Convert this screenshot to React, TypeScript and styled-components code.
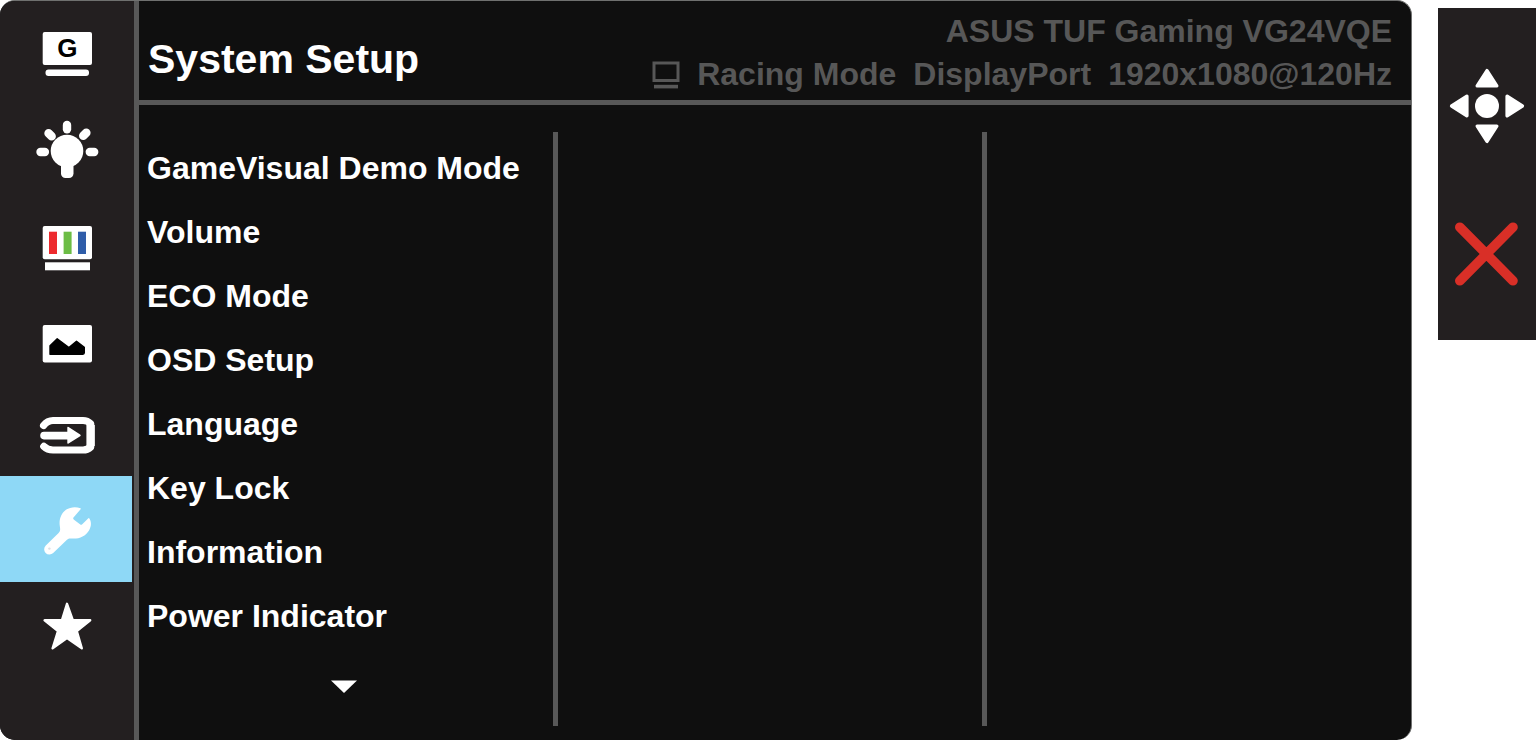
import React from "react";
import styled, { createGlobalStyle } from "styled-components";

const colors = {
  panel: "#0f0f0f",
  rail: "#231f20",
  line: "#585858",
  edge: "#6f706f",
  dim: "#575757",
  active: "#8ed8f6",
  close: "#d92f27",
};

const GlobalStyle = createGlobalStyle`
  *, *::before, *::after { box-sizing: border-box; }
  body {
    margin: 0;
    background: #fff;
    font-family: "Liberation Sans", Arial, sans-serif;
    font-weight: 700;
  }
`;

const Page = styled.div`
  display: flex;
  align-items: flex-start;
  gap: 26px;
`;

const Osd = styled.main`
  flex: 1;
  min-width: 0;
  display: flex;
  overflow: hidden;
  background: ${colors.panel};
  border: solid ${colors.edge};
  border-width: 1px 1px 0 0;
  border-radius: 15px;
`;

const Rail = styled.nav`
  flex: none;
  width: 139px;
  background: ${colors.rail};
  border-right: 5px solid ${colors.line};
`;

const PlainButton = styled.button`
  display: flex;
  margin: 0;
  padding: 0;
  border: 0;
  background: none;
  color: #fff;
  font: inherit;
  cursor: pointer;
`;

const RailButton = styled(PlainButton)<{ $active?: boolean }>`
  width: 132px;
  height: ${(p) => (p.$active ? 106 : 95)}px;
  padding-top: 18px;
  justify-content: center;
  align-items: flex-start;
  background: ${(p) => (p.$active ? colors.active : "transparent")};
`;

const Main = styled.div`
  flex: 1;
  min-width: 0;
`;

const Header = styled.header`
  display: flex;
  justify-content: space-between;
  align-items: flex-start;
  height: 104px;
  padding: 9px 19px 0 9px;
  border-bottom: 5px solid ${colors.line};
`;

const Title = styled.h1`
  margin: 26px 0 0;
  color: #fff;
  font-size: 41px;
  line-height: 46px;
  white-space: nowrap;
`;

const Status = styled.div`
  display: flex;
  flex-direction: column;
  align-items: flex-end;
  color: ${colors.dim};
  font-size: 32px;
  line-height: 43px;
  white-space: nowrap;
`;

const StatusRow = styled.div`
  display: flex;
  align-items: center;
  gap: 17px;
`;

const Columns = styled.div`
  display: grid;
  grid-template-columns: 414fr 429fr 429fr;
  padding: 27px 0 14px;
`;

const Column = styled.section`
  border-left: 5px solid ${colors.line};
`;

const MenuColumn = styled.section`
  padding-top: 4px;
`;

const Menu = styled.ul`
  margin: 0;
  padding: 0;
  list-style: none;
`;

const MenuButton = styled(PlainButton)`
  width: 100%;
  padding-left: 8px;
  font-size: 32px;
  line-height: 64px;
  white-space: nowrap;
`;

const MoreButton = styled(PlainButton)`
  width: 100%;
  height: 78px;
  padding: 0 4px 2px 0;
  align-items: center;
  justify-content: center;
`;

const Controls = styled.aside`
  flex: none;
  display: flex;
  flex-direction: column;
  align-items: center;
  gap: 78px;
  width: 98px;
  margin-top: 8px;
  padding: 60px 0 54px;
  background: ${colors.rail};
`;

const RailSvg = ({ children }: { children: React.ReactNode }) => (
  <svg width="72" height="72" viewBox="0 0 72 72" fill="#fff" aria-hidden="true">
    {children}
  </svg>
);

const GamingIcon = () => (
  <RailSvg>
    <rect x="12.7" y="13" width="49.3" height="33" rx="2" />
    <rect x="15.5" y="50.5" width="43.5" height="6.5" rx="3" />
    <text x="37.4" y="38.4" fontSize="26" textAnchor="middle" fill="#000">G</text>
  </RailSvg>
);

const BulbIcon = () => (
  <RailSvg>
    <circle cx="37" cy="37" r="16.3" />
    <path d="M31 48v11.5a4.5 4.5 0 0 0 4.5 4.5h3.5a4.5 4.5 0 0 0 4.5-4.5V48z" />
    <rect x="32.8" y="6.7" width="8.4" height="12.8" rx="4.2" />
    <rect x="6.3" y="33.7" width="12.8" height="8.6" rx="4.2" />
    <rect x="55.6" y="33.7" width="12.8" height="8.6" rx="4.2" />
    <path d="M18.6 19.2l3 3M56.3 18.8l-3 3" stroke="#fff" strokeWidth="8.6" strokeLinecap="round" />
  </RailSvg>
);

const ColorIcon = () => (
  <RailSvg>
    <rect x="12.7" y="17" width="49.3" height="33.3" rx="2" />
    <rect x="15" y="53.3" width="45" height="8" />
    <rect x="19" y="22.7" width="8" height="22.3" fill="#ed2a2e" />
    <rect x="33.6" y="22.7" width="8" height="22.3" fill="#6cbd45" />
    <rect x="48" y="22.7" width="8" height="22.3" fill="#2f5da9" />
  </RailSvg>
);

const ImageIcon = () => (
  <RailSvg>
    <rect x="12.7" y="21" width="49.3" height="37.6" rx="2" />
    <path
      d="M20 41.8l7.2-7 11.7 8.8 7.6-6.4 7.8 6.2v5.4q0 1.4-1.4 1.4H20z"
      fill="#000"
      stroke="#000"
      strokeWidth="1.4"
      strokeLinejoin="round"
    />
  </RailSvg>
);

const InputIcon = () => (
  <RailSvg>
    <path
      d="M13.6 26.4Q17.5 21.5 23 21.5H53Q57.5 21.5 60.7 24.8V48Q57.5 51 53 51H23Q17.5 51 13.8 47.4"
      fill="none"
      stroke="#fff"
      strokeWidth="7.2"
      strokeLinecap="round"
      strokeLinejoin="round"
    />
    <path d="M56.4 26h8.4v21h-8.4z" />
    <path d="M14 32.8H37.3V28.6Q37.3 27.4 38.6 28L50.2 35.4Q51.4 36.3 50.2 37.2L38.6 44.6Q37.3 45.2 37.3 44V40.4H14a3.8 3.8 0 0 1 0-7.6z" />
  </RailSvg>
);

const WrenchIcon = () => (
  <RailSvg>
    <path d="M50.4 14.2C46 12.5 40.3 12.8 36 15.8C31.2 19 28.8 25.6 29.8 32C30.3 35.4 30.5 37.2 28.6 39L15.8 51.4A5.3 5.3 0 0 0 23.2 59.1L37 45.7C38.5 44.3 39.6 44.3 41.8 44.5C48.6 45.2 55.6 42.2 59 36.4C61.4 32.2 61.6 27.8 59.4 24.4Q58.8 23.7 58.1 24.5L52 30.4Q51.2 31 50.3 30.5L43.7 25.4Q42.9 24.7 43.3 23.7L50.6 15.3Q51.2 14.5 50.4 14.2z" />
    <circle cx="19.4" cy="54.6" r="1.2" fill="#dfe0e4" />
  </RailSvg>
);

const StarIcon = () => (
  <RailSvg>
    <path
      d="M37 3.8L42.9 20.3H60.2L46.8 31L51.8 48.3L37 38L22.6 48.3L28 31L14.6 20.3H31.9z"
      stroke="#fff"
      strokeWidth="2.4"
      strokeLinejoin="round"
    />
  </RailSvg>
);

const MonitorIcon = () => (
  <svg width="28" height="28" viewBox="0 0 28 28" aria-hidden="true">
    <rect x="2" y="2" width="24" height="17.5" fill="none" stroke={colors.dim} strokeWidth="3" />
    <rect x="2" y="23.8" width="24" height="3.6" fill={colors.dim} />
  </svg>
);

const StickIcon = () => (
  <svg width="76" height="76" viewBox="-38 -38 76 76" fill="#fff" aria-hidden="true">
    <circle r="12" />
    {[0, 90, 180, 270].map((angle) => (
      <path
        key={angle}
        d="M0-35.4L9.8-20.1H-9.8z"
        transform={`rotate(${angle})`}
        stroke="#fff"
        strokeWidth="3.4"
        strokeLinejoin="round"
      />
    ))}
  </svg>
);

const CloseIcon = () => (
  <svg width="64" height="64" viewBox="0 0 64 64" aria-hidden="true">
    <path
      d="M4.8 5.2L58 58.8M58 5.2L4.8 58.8"
      stroke={colors.close}
      strokeWidth="9.6"
      strokeLinecap="round"
    />
  </svg>
);

const sections = [
  { label: "Gaming", Icon: GamingIcon },
  { label: "Image brightness", Icon: BulbIcon },
  { label: "Color", Icon: ColorIcon },
  { label: "Image", Icon: ImageIcon },
  { label: "Input Select", Icon: InputIcon },
  { label: "System Setup", Icon: WrenchIcon, active: true },
  { label: "MyFavorite", Icon: StarIcon },
];

const menuItems = [
  "GameVisual Demo Mode",
  "Volume",
  "ECO Mode",
  "OSD Setup",
  "Language",
  "Key Lock",
  "Information",
  "Power Indicator",
];

export default function App() {
  return (
    <>
      <GlobalStyle />
      <Page>
        <Osd>
          <Rail>
            {sections.map(({ label, Icon, active }) => (
              <RailButton
                key={label}
                type="button"
                aria-label={label}
                aria-current={active ? "page" : undefined}
                $active={active}
              >
                <Icon />
              </RailButton>
            ))}
          </Rail>
          <Main>
            <Header>
              <Title>System Setup</Title>
              <Status>
                <StatusRow>ASUS TUF Gaming VG24VQE</StatusRow>
                <StatusRow>
                  <MonitorIcon />
                  <span>Racing Mode</span>
                  <span>DisplayPort</span>
                  <span>1920x1080@120Hz</span>
                </StatusRow>
              </Status>
            </Header>
            <Columns>
              <MenuColumn>
                <Menu>
                  {menuItems.map((item) => (
                    <li key={item}>
                      <MenuButton type="button">{item}</MenuButton>
                    </li>
                  ))}
                </Menu>
                <MoreButton type="button" aria-label="More items">
                  <svg width="26" height="13" viewBox="0 0 26 13" fill="#fff" aria-hidden="true">
                    <path d="M0 0.5H26L13 13z" />
                  </svg>
                </MoreButton>
              </MenuColumn>
              <Column />
              <Column />
            </Columns>
          </Main>
        </Osd>
        <Controls>
          <PlainButton type="button" aria-label="Navigate">
            <StickIcon />
          </PlainButton>
          <PlainButton type="button" aria-label="Close">
            <CloseIcon />
          </PlainButton>
        </Controls>
      </Page>
    </>
  );
}
